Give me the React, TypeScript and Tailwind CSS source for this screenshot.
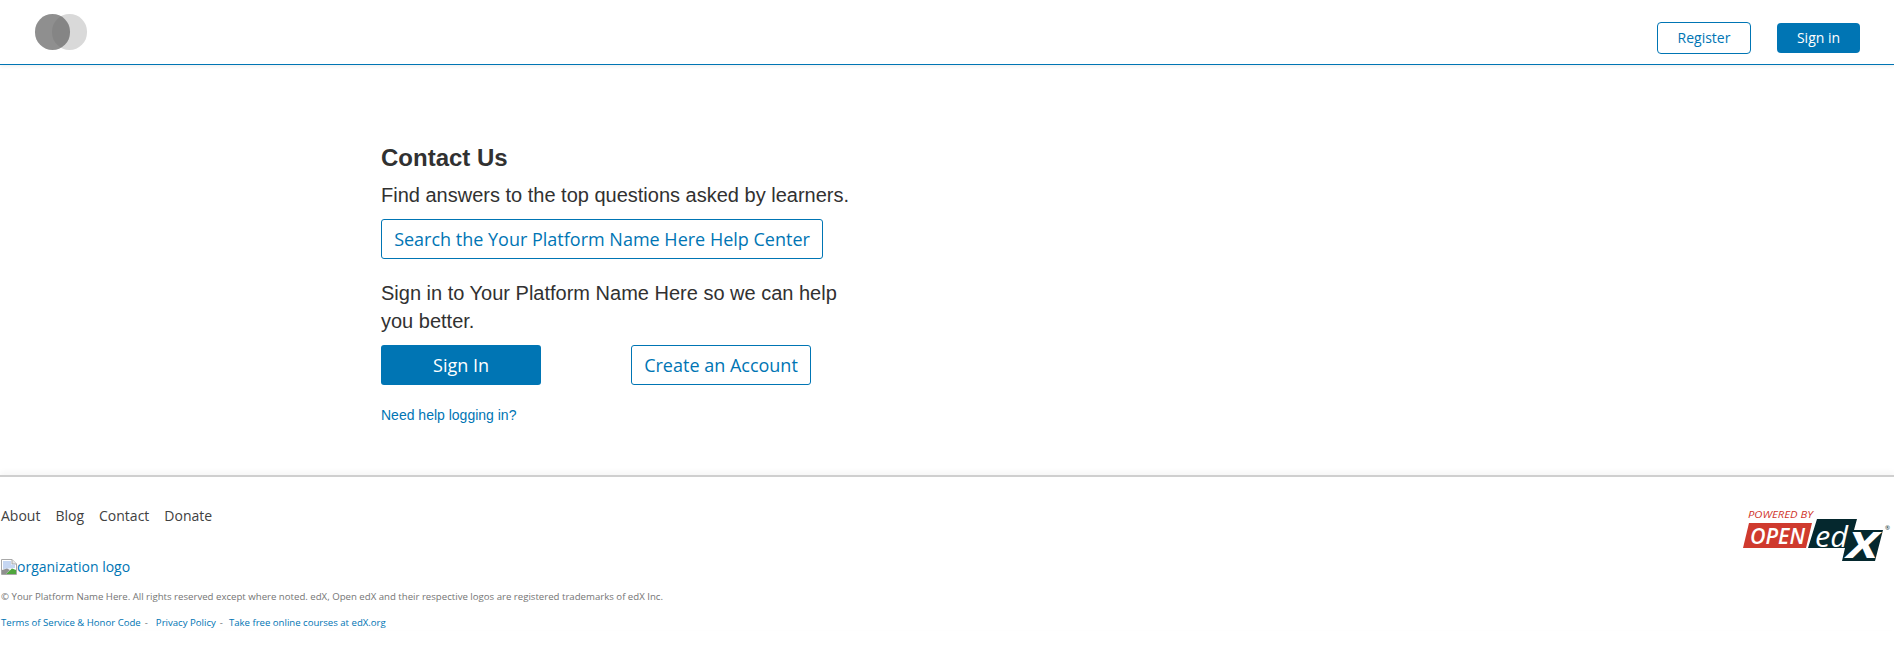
import React from 'react';

const openSans = { fontFamily: '"Open Sans", sans-serif' };

function BrokenImage() {
  return (
    <svg width="16" height="16" viewBox="0 0 16 16" className="shrink-0">
      <path d="M0.5 0.5H11L15.5 5V15.5H0.5Z" fill="#fff" stroke="#a8a8a8" />
      <path d="M11 0.5V5H15.5" fill="#e8e8e8" stroke="#a8a8a8" />
      <path d="M2 2H10V5.5H14V9L2 10Z" fill="#c5d6f2" />
      <path d="M1 15V11L6 9.5L9 11L5 15Z" fill="#8f8f8f" />
      <path d="M5 15L11 9.5L15 11V15Z" fill="#4fa63d" />
    </svg>
  );
}

function OpenEdxLogo() {
  return (
    <svg width="154" height="66" viewBox="0 0 154 66">
      <text x="8" y="10" fontFamily="'Open Sans', sans-serif" fontSize="9.5" fontStyle="italic" fill="#d0352b" textLength="65" lengthAdjust="spacingAndGlyphs">POWERED BY</text>
      <polygon points="9,15 72,15 66,40 3,40" fill="#cf3a2e" />
      <polygon points="77,11 117,11 114,22 143,22 135,53 102,53 105,40 68,40" fill="#05282e" />
      <text x="10" y="36" fontFamily="'Open Sans', sans-serif" fontSize="22" fontWeight="600" fontStyle="italic" fill="#fff" textLength="55" lengthAdjust="spacingAndGlyphs">OPEN</text>
      <text x="75" y="39" fontFamily="'Open Sans', sans-serif" fontSize="29" fontStyle="italic" fill="#fff" textLength="33" lengthAdjust="spacingAndGlyphs">ed</text>
      <text x="107" y="50" fontFamily="'Open Sans', sans-serif" fontSize="36" fontWeight="700" fontStyle="italic" fill="#fff" textLength="31" lengthAdjust="spacingAndGlyphs">X</text>
      <text x="145" y="22" fontFamily="'Open Sans', sans-serif" fontSize="6" fill="#05282e">®</text>
    </svg>
  );
}

export default function App() {
  return (
    <div className="min-h-[645px] bg-white text-[#313131] font-['Liberation_Sans',Arial,sans-serif]">
      {/* header */}
      <header className="h-[65px] flex items-center justify-between border-b border-[#0075b4] pl-[35px] pr-[34px] shadow-[0_1px_4px_rgba(0,0,0,0.08)]">
        <div className="flex mb-[1px]">
          <div className="w-[35px] h-[36px] rounded-full bg-[#d9d9d9] order-2 -ml-[18px]"></div>
          <div className="w-[35px] h-[36px] rounded-full bg-[rgba(104,104,104,0.74)] order-1 z-10"></div>
        </div>
        <div className="flex items-center gap-[26px] mt-[11px]" style={openSans}>
          <a className="w-[94px] h-[32px] flex items-center justify-center border border-[#0075b4] rounded-[4px] text-[14px] text-[#0075b4]">Register</a>
          <a className="w-[83px] h-[30px] flex items-center justify-center bg-[#0075b4] rounded-[4px] text-[14px] text-white">Sign in</a>
        </div>
      </header>

      {/* main */}
      <main className="h-[410px] pl-[381px] pt-[77px]">
        <h1 className="text-[24px] leading-[32px] font-bold">Contact Us</h1>
        <p className="text-[20px] leading-[30px] mt-[6px]">Find answers to the top questions asked by learners.</p>
        <a className="mt-[9px] w-[442px] h-[40px] flex items-center justify-center border border-[#0075b4] rounded-[3px] text-[18px] text-[#0075b4]" style={openSans}>
          Search the Your Platform Name Here Help Center
        </a>
        <p className="text-[20px] leading-[28px] mt-[20px] w-[480px]">Sign in to Your Platform Name Here so we can help you better.</p>
        <div className="flex mt-[10px]" style={openSans}>
          <a className="w-[160px] h-[40px] flex items-center justify-center bg-[#0075b4] rounded-[3px] text-[18px] text-white">Sign In</a>
          <a className="ml-[90px] w-[180px] h-[40px] flex items-center justify-center border border-[#0075b4] rounded-[3px] text-[18px] text-[#0075b4]">Create an Account</a>
        </div>
        <a className="block mt-[20px] text-[14px] leading-[20px] text-[#0075b4]">Need help logging in?</a>
      </main>

      {/* footer */}
      <footer className="border-t-2 border-[#cfcfcf] shadow-[0_-3px_6px_rgba(0,0,0,0.04)]" style={openSans}>
        <div className="flex justify-between pt-[29px]">
          <div>
            <nav className="flex gap-[15px] pl-[1px] text-[14px] leading-[20px] text-[#414141]">
              <a>About</a>
              <a>Blog</a>
              <a>Contact</a>
              <a>Donate</a>
            </nav>
            <a className="mt-[31px] flex items-center pl-[1px] text-[14px] leading-[20px] text-[#0075b4]">
              <BrokenImage />
              organization logo
            </a>
            <p className="mt-[13px] pl-[1px] text-[9.64px] leading-[14px] text-[#757575]">
              © Your Platform Name Here. All rights reserved except where noted. edX, Open edX and their respective logos are registered trademarks of edX Inc.
            </p>
            <div className="mt-[12px] pl-[1px] flex text-[9.6px] leading-[14px] text-[#0075b4]">
              <a>Terms of Service &amp; Honor Code</a>
              <span className="text-[#757575] ml-[4px] mr-[8px]">-</span>
              <a>Privacy Policy</a>
              <span className="text-[#757575] ml-[4px] mr-[6px]">-</span>
              <a>Take free online courses at edX.org</a>
            </div>
          </div>
          <div className="mt-[2px]">
            <OpenEdxLogo />
          </div>
        </div>
      </footer>
    </div>
  );
}
